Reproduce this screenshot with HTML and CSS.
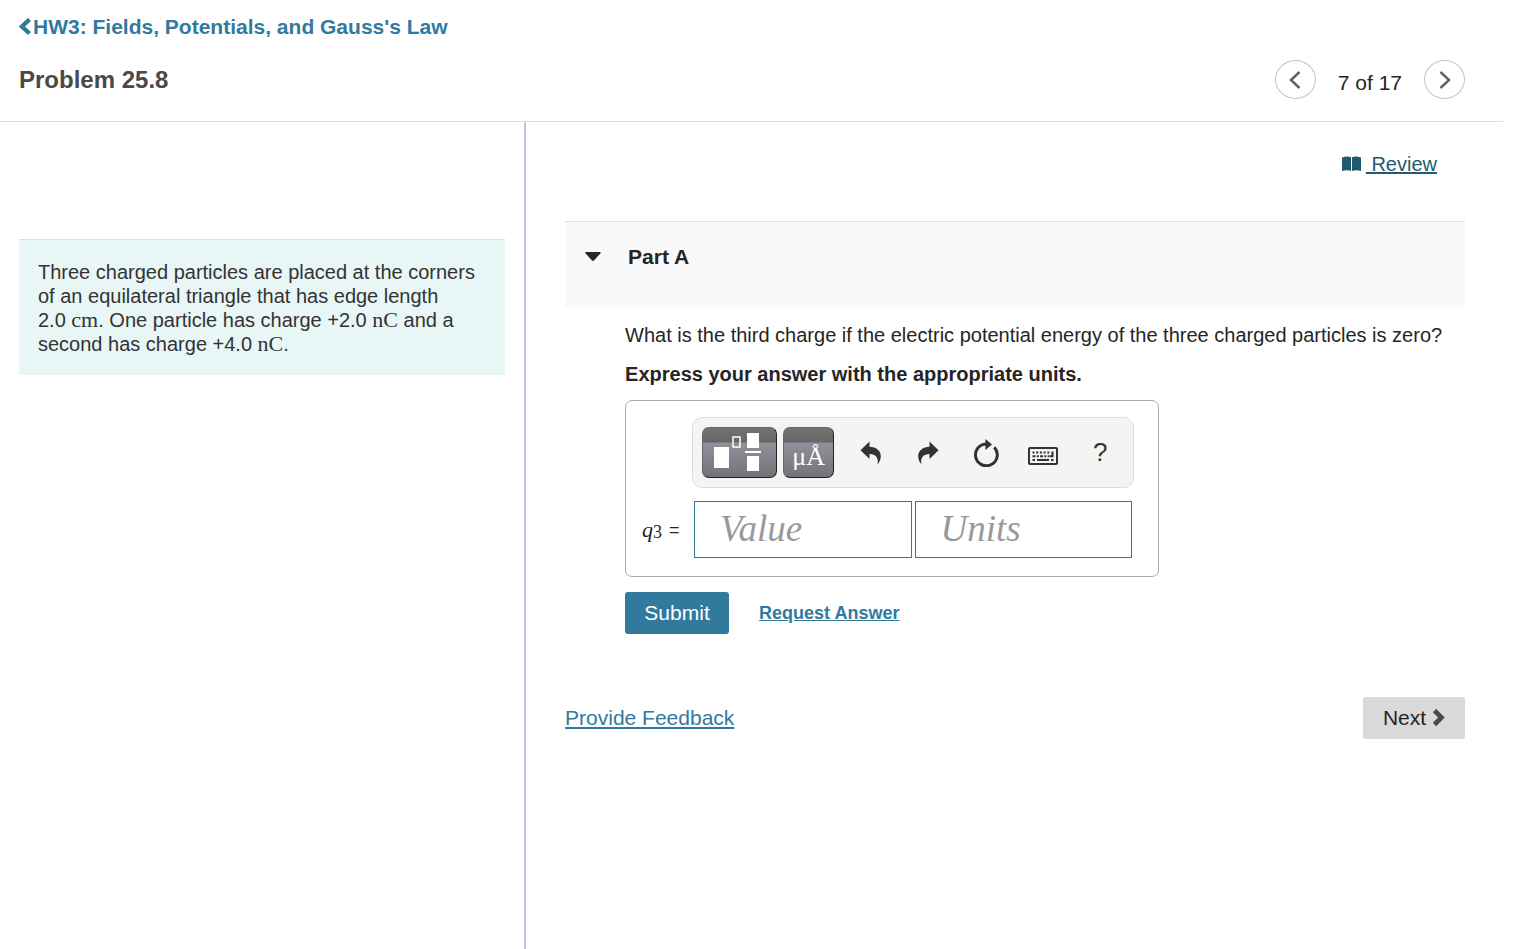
FILE: index.html
```html
<!DOCTYPE html>
<html lang="en">
<head>
    <meta charset="UTF-8">
    <meta name="viewport" content="width=device-width, initial-scale=1.0">
    <title>Problem 25.8</title>
    <link rel="stylesheet" href="styles.css">
</head>
<body>
    <!-- Header -->
    <header class="header">
        <a class="back-link" href="#">
            <svg width="14" height="18" viewBox="0 0 14 18"><path d="M10.5 1.5 L3 8.5 L10.5 15.5" fill="none" stroke="currentColor" stroke-width="4.4"/></svg><span>HW3: Fields, Potentials, and Gauss's Law</span>
        </a>
        <div class="title-row">
            <h1>Problem 25.8</h1>
            <nav class="pager">
                <button class="round-btn" aria-label="Previous item">
                    <svg width="12" height="18" viewBox="0 0 12 18"><path d="M10.5 1 L2 9 L10.5 17" fill="none" stroke="currentColor" stroke-width="2.6"/></svg>
                </button>
                <span>7 of 17</span>
                <button class="round-btn" aria-label="Next item">
                    <svg width="12" height="18" viewBox="0 0 12 18"><path d="M1.5 1 L10 9 L1.5 17" fill="none" stroke="currentColor" stroke-width="2.6"/></svg>
                </button>
            </nav>
        </div>
    </header>

    <main class="columns">
        <!-- Problem statement -->
        <section class="intro">
            <p class="statement">Three charged particles are placed at the corners of an equilateral triangle that has edge length 2.0&nbsp;<span class="unit">cm</span>. One particle has charge +2.0&nbsp;<span class="unit">nC</span> and a second has charge +4.0&nbsp;<span class="unit">nC</span>.</p>
        </section>

        <!-- Question and answer -->
        <section class="work">
            <div class="review-row">
                <a class="review" href="#"><svg width="19" height="16" viewBox="0 0 19 16"><path d="M0 1.5 Q5 -0.5 9 1.2 V15 Q5 13.5 0 15 Z M19 1.5 Q14 -0.5 10 1.2 V15 Q14 13.5 19 15 Z" fill="currentColor"/></svg><span>&nbsp;Review</span></a>
            </div>

            <div class="part-head">
                <button class="toggle" aria-label="Collapse Part A">
                    <svg width="16" height="10" viewBox="0 0 16 10"><path d="M1 0 H15 Q16 0.4 15.4 1.4 L9 8.6 Q8 9.5 7 8.6 L0.6 1.4 Q0 0.4 1 0 Z" fill="currentColor"/></svg>
                </button>
                <h2>Part A</h2>
            </div>

            <div class="part-body">
                <p>What is the third charge if the electric potential energy of the three charged particles is zero?</p>
                <p class="instructions">Express your answer with the appropriate units.</p>

                <form class="answer">
                    <div class="toolbar">
                        <button type="button" class="dark-btn templates" aria-label="Templates">
                            <svg width="54" height="42" viewBox="0 0 54 42">
                                <g fill="#fff">
                                    <rect x="1" y="15" width="15" height="21"/>
                                    <rect x="34" y="1" width="12" height="15"/>
                                    <rect x="32" y="19" width="16" height="2"/>
                                    <rect x="34" y="24" width="12" height="15"/>
                                </g>
                                <rect x="20" y="5" width="7" height="10" fill="none" stroke="#fff" stroke-width="1.5"/>
                            </svg>
                        </button>
                        <button type="button" class="dark-btn symbols" aria-label="Symbols">μÅ</button>
                        <div class="tools">
                            <button type="button" aria-label="Undo">
                                <svg width="22" height="24" viewBox="0 0 22 24"><path d="M0.5 9.2 L9.5 0.5 V5.7 C16 5.9 20.8 9.5 20.8 15 C20.8 18.5 19.5 21.5 17.4 23.3 C19.2 17 15.5 13 9.5 13 V18 Z" fill="currentColor"/></svg>
                            </button>
                            <button type="button" aria-label="Redo">
                                <svg width="22" height="24" viewBox="0 0 22 24"><path d="M21.5 9.2 L12.5 0.5 V5.7 C6 5.9 1.2 9.5 1.2 15 C1.2 18.5 2.5 21.5 4.6 23.3 C2.8 17 6.5 13 12.5 13 V18 Z" fill="currentColor"/></svg>
                            </button>
                            <button type="button" aria-label="Reset">
                                <svg width="26" height="28" viewBox="0 0 26 28"><path d="M21.2 8.3 A10.9 10.9 0 1 1 13 5" fill="none" stroke="currentColor" stroke-width="3"/><path d="M12.4 0 L19 5.4 L12.4 11 Z" fill="currentColor"/></svg>
                            </button>
                            <button type="button" class="keyboard" aria-label="Keyboard shortcuts">
                                <svg width="30" height="18" viewBox="0 0 30 18"><rect x="1" y="1" width="28" height="16" rx="1" fill="none" stroke="currentColor" stroke-width="2"/><path d="M4.5 5.5 H22" fill="none" stroke="currentColor" stroke-width="2" stroke-dasharray="2 1.7"/><path d="M4.5 9.2 H21" fill="none" stroke="currentColor" stroke-width="2" stroke-dasharray="3 1.3 2 1.3"/><path d="M4.5 13 H7 M9 13 H21 M23 13 H25.5 M24.5 4.5 V9.2 H21.5" fill="none" stroke="currentColor" stroke-width="2"/></svg>
                            </button>
                            <button type="button" class="help" aria-label="Help">?</button>
                        </div>
                    </div>
                    <label class="variable" for="value"><i>q</i><sub>3</sub> <span>=</span></label>
                    <div class="fields">
                        <input type="text" id="value" placeholder="Value">
                        <input type="text" id="units" placeholder="Units" aria-label="Units">
                    </div>
                </form>

                <div class="actions">
                    <button class="submit-btn">Submit</button>
                    <a class="request" href="#">Request Answer</a>
                </div>
            </div>

            <footer class="bottom-row">
                <a class="feedback" href="#">Provide Feedback</a>
                <button class="next-btn"><span>Next</span>
                    <svg width="13" height="18" viewBox="0 0 13 18"><path d="M2.5 1.5 L9.5 8.5 L2.5 15.5" fill="none" stroke="currentColor" stroke-width="4.6"/></svg>
                </button>
            </footer>
        </section>
    </main>
</body>
</html>
```

FILE: styles.css
```css
* {
    box-sizing: border-box;
}

body {
    margin: 0;
    padding-right: 10px;
    min-height: 100vh;
    display: flex;
    flex-direction: column;
    font-family: Arial, "Liberation Sans", sans-serif;
    font-size: 20px;
    line-height: 24px;
    color: #252525;
    background-color: #fff;
}

h1,
h2,
p {
    margin: 0;
}

button {
    font-family: inherit;
    font-size: 21px;
    padding: 0;
    border: none;
    background: none;
    color: inherit;
    cursor: pointer;
}

svg {
    display: block;
    flex: none;
}

a {
    color: #317a9e;
}

/* Header */
.header {
    padding: 15px 38px 22px 19px;
    border-bottom: 1px solid #ddd;
}

.back-link {
    display: inline-flex;
    align-items: center;
    font-size: 21px;
    font-weight: bold;
    text-decoration: none;
}

.title-row {
    display: flex;
    justify-content: space-between;
    align-items: center;
    margin-top: 19px;
}

.title-row h1 {
    font-size: 24px;
    color: #494949;
}

.pager {
    display: flex;
    align-items: center;
    gap: 22px;
}

.pager span {
    padding-top: 6px;
    font-size: 21px;
}

.round-btn {
    display: flex;
    align-items: center;
    justify-content: center;
    width: 41px;
    height: 39px;
    border: 1px solid #c4c4c4;
    border-radius: 50%;
    color: #666;
}

/* Two columns */
.columns {
    flex: 1;
    display: grid;
    grid-template-columns: 35% 1fr;
}

.intro {
    padding: 117px 19px 20px;
    border-right: 2px solid #bcc8de;
}

.statement {
    padding: 20px 19px 19px;
    border-top: 1px solid #ddd;
    background-color: #e8f6f6;
    color: #333;
}

.unit {
    font-family: "Liberation Serif", serif;
    font-size: 22px;
    line-height: 20px;
}

.work {
    padding: 30px 38px 30px 39px;
}

.review-row {
    display: flex;
    justify-content: flex-end;
    padding-right: 28px;
}

.review {
    display: flex;
    align-items: center;
    gap: 5px;
    color: #235a70;
    text-decoration: none;
}

.review span {
    text-decoration: underline;
}

.part-head {
    display: flex;
    align-items: flex-start;
    gap: 27px;
    height: 86px;
    margin-top: 45px;
    padding: 23px 20px;
    border-top: 1px solid #ddd;
    background-color: #f9f9f9;
}

.part-head h2 {
    font-size: 21px;
}

.toggle {
    height: 24px;
}

.part-body {
    padding: 16px 0 0 60px;
}

.instructions {
    margin-top: 15px;
    font-weight: bold;
}

/* Answer box */
.answer {
    display: grid;
    grid-template-columns: 50px 442px;
    row-gap: 13px;
    width: fit-content;
    margin-top: 14px;
    padding: 16px 24px 18px 16px;
    border: 1px solid #aaa;
    border-radius: 7px;
}

.toolbar {
    grid-column: 2;
    display: flex;
    padding: 9px 4px 9px 9px;
    border: 1px solid #ddd;
    border-radius: 10px;
    background-color: #f4f4f4;
    color: #333;
}

.dark-btn {
    display: flex;
    align-items: center;
    justify-content: center;
    height: 51px;
    margin-right: 6px;
    border: 1px solid #666;
    border-right-color: #222;
    border-bottom-color: #222;
    border-radius: 7px;
    background: linear-gradient(#737373, #666 14px, #92909a 15px, #747378);
    color: #fff;
}

.templates {
    width: 75px;
}

.symbols {
    width: 51px;
    padding-top: 8px;
    font-family: "Liberation Serif", serif;
    font-size: 26px;
}

.tools {
    flex: 1;
    display: grid;
    grid-template-columns: repeat(5, 1fr);
    padding-left: 2px;
}

.tools button {
    display: flex;
    align-items: center;
    justify-content: center;
}

.tools .keyboard {
    padding-top: 6px;
}

.tools .help {
    font-size: 26px;
}

.variable {
    display: flex;
    align-items: center;
    font-family: "Liberation Serif", serif;
    font-size: 22px;
}

.variable sub {
    padding-top: 5px;
    font-size: 18px;
    vertical-align: baseline;
}

.variable span {
    margin-left: 7px;
    font-family: Arial, "Liberation Sans", sans-serif;
    font-size: 18px;
}

.fields {
    display: grid;
    grid-template-columns: 1fr 1fr;
    gap: 3px;
    padding: 0 2px;
}

.fields input {
    width: 100%;
    height: 57px;
    padding: 0 25px 2px;
    border: 1px solid #317a9e;
    font-family: "Liberation Serif", serif;
    font-size: 37px;
}

.fields input::placeholder {
    color: #999;
    font-style: italic;
}

.actions {
    display: flex;
    align-items: center;
    gap: 30px;
    margin-top: 15px;
}

.submit-btn {
    width: 104px;
    height: 42px;
    border-radius: 3px;
    background-color: #317a9e;
    color: #fff;
}

.request {
    font-size: 18px;
    font-weight: bold;
}

.bottom-row {
    display: flex;
    justify-content: space-between;
    align-items: center;
    margin-top: 63px;
}

.feedback {
    font-size: 21px;
}

.next-btn {
    display: flex;
    align-items: center;
    justify-content: center;
    gap: 6px;
    width: 102px;
    height: 42px;
    border-radius: 3px;
    background-color: #d9d9d9;
}

.next-btn svg {
    color: #494949;
}
```
